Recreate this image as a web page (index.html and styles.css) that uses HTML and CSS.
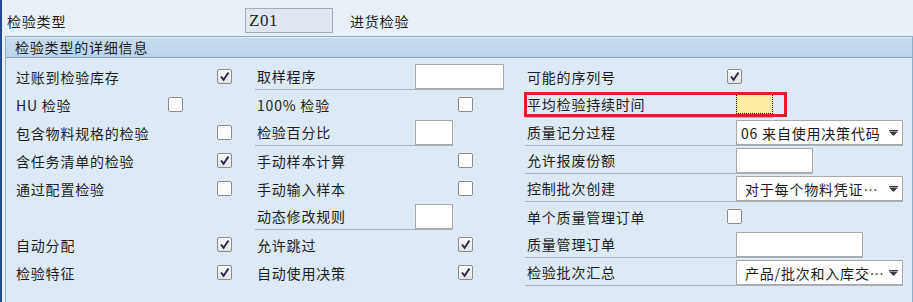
FILE: index.html
```html
<!DOCTYPE html>
<html lang="zh">
<head>
  <meta charset="UTF-8" />
  <title>检验类型</title>
  <link rel="stylesheet" href="styles.css">
</head>
<body>
  <div class="screen">
    <div class="top-row">
      <span class="top-label">检验类型</span>
      <span class="code-field">Z01</span>
      <span class="top-desc">进货检验</span>
    </div>

    <div class="group">
      <div class="group-title">检验类型的详细信息</div>
      <div class="grid">
        <!-- row 1 -->
        <div class="cell"><span class="lbl">过账到检验库存</span><span class="chk on"><svg viewBox="0 0 13 13" width="13" height="13"><path d="M3 6.5l2.6 3.4L10.5 2.5" fill="none" stroke="#2c2c52" stroke-width="2"/></svg></span></div>
        <div class="cell field"><span class="lbl f2">取样程序</span><span class="inp" style="width:89px"></span></div>
        <div class="cell"><span class="lbl c3">可能的序列号</span><span class="chk on"><svg viewBox="0 0 13 13" width="13" height="13"><path d="M3 6.5l2.6 3.4L10.5 2.5" fill="none" stroke="#2c2c52" stroke-width="2"/></svg></span></div>

        <!-- row 2 -->
        <div class="cell"><span class="lbl hu">HU 检验</span><span class="chk"></span></div>
        <div class="cell"><span class="lbl">100% 检验</span><span class="chk"></span></div>
        <div class="cell field"><span class="lbl f3">平均检验持续时间</span><span class="focus-inp"></span></div>

        <!-- row 3 -->
        <div class="cell"><span class="lbl">包含物料规格的检验</span><span class="chk"></span></div>
        <div class="cell field"><span class="lbl f2">检验百分比</span><span class="inp" style="width:38px"></span></div>
        <div class="cell field"><span class="lbl f3">质量记分过程</span><span class="inp sel" style="width:167px"><span class="sel-text">06 来自使用决策代码</span><svg class="arrow" viewBox="0 0 9 6" width="9" height="6"><path d="M0 0h9v1H0zM0 1.5h9L4.5 6z" fill="#3a3a44"/></svg></span></div>

        <!-- row 4 -->
        <div class="cell"><span class="lbl">含任务清单的检验</span><span class="chk on"><svg viewBox="0 0 13 13" width="13" height="13"><path d="M3 6.5l2.6 3.4L10.5 2.5" fill="none" stroke="#2c2c52" stroke-width="2"/></svg></span></div>
        <div class="cell"><span class="lbl">手动样本计算</span><span class="chk"></span></div>
        <div class="cell field"><span class="lbl f3">允许报废份额</span><span class="inp" style="width:77px"></span></div>

        <!-- row 5 -->
        <div class="cell"><span class="lbl">通过配置检验</span><span class="chk"></span></div>
        <div class="cell"><span class="lbl">手动输入样本</span><span class="chk"></span></div>
        <div class="cell field"><span class="lbl f3">控制批次创建</span><span class="inp sel" style="width:167px"><span class="sel-text wide">对于每个物料凭证…</span><svg class="arrow" viewBox="0 0 9 6" width="9" height="6"><path d="M0 0h9v1H0zM0 1.5h9L4.5 6z" fill="#3a3a44"/></svg></span></div>

        <!-- row 6 -->
        <div class="cell"></div>
        <div class="cell field"><span class="lbl f2">动态修改规则</span><span class="inp" style="width:38px"></span></div>
        <div class="cell"><span class="lbl c3">单个质量管理订单</span><span class="chk"></span></div>

        <!-- row 7 -->
        <div class="cell"><span class="lbl">自动分配</span><span class="chk on"><svg viewBox="0 0 13 13" width="13" height="13"><path d="M3 6.5l2.6 3.4L10.5 2.5" fill="none" stroke="#2c2c52" stroke-width="2"/></svg></span></div>
        <div class="cell"><span class="lbl">允许跳过</span><span class="chk on"><svg viewBox="0 0 13 13" width="13" height="13"><path d="M3 6.5l2.6 3.4L10.5 2.5" fill="none" stroke="#2c2c52" stroke-width="2"/></svg></span></div>
        <div class="cell field"><span class="lbl f3">质量管理订单</span><span class="inp" style="width:127px"></span></div>

        <!-- row 8 -->
        <div class="cell"><span class="lbl">检验特征</span><span class="chk on"><svg viewBox="0 0 13 13" width="13" height="13"><path d="M3 6.5l2.6 3.4L10.5 2.5" fill="none" stroke="#2c2c52" stroke-width="2"/></svg></span></div>
        <div class="cell"><span class="lbl">自动使用决策</span><span class="chk on"><svg viewBox="0 0 13 13" width="13" height="13"><path d="M3 6.5l2.6 3.4L10.5 2.5" fill="none" stroke="#2c2c52" stroke-width="2"/></svg></span></div>
        <div class="cell field"><span class="lbl f3">检验批次汇总</span><span class="inp sel" style="width:167px"><span class="sel-text wide">产品/批次和入库交…</span><svg class="arrow" viewBox="0 0 9 6" width="9" height="6"><path d="M0 0h9v1H0zM0 1.5h9L4.5 6z" fill="#3a3a44"/></svg></span></div>
      </div>
    </div>

    <div class="highlight"></div>
  </div>
</body>
</html>
```

FILE: styles.css
```css
body {
  margin: 0;
  font-family: "Noto Sans CJK SC", "Noto Sans", sans-serif;
  font-size: 14px;
  letter-spacing: 0.8px;
  color: #1c1c1c;
  background: #e8eff7;
}

.screen {
  position: relative;
  width: 913px;
  height: 302px;
  overflow: hidden;
  box-sizing: border-box;
  border-left: 2px solid #27498a;
  background: #e8eff7;
}

.top-row {
  display: flex;
  align-items: center;
  height: 25px;
  padding: 8px 0 0 5px;
  line-height: 20px;
}

.top-label {
  width: 238px;
}

.code-field {
  width: 88px;
  height: 25px;
  box-sizing: border-box;
  border: 1px solid #a3acb5;
  background: #dfe8f0;
  padding-left: 3px;
  font-family: "Liberation Serif", serif;
  font-size: 17px;
  letter-spacing: 0.5px;
  line-height: 23px;
  color: #222;
}

.top-desc {
  margin-left: 17px;
}

.group {
  margin: 3px 0 0 3px;
  height: 266px;
  box-sizing: border-box;
  border: 1px solid #8eaecb;
  border-bottom: none;
  background: #dde9f5;
}

.group-title {
  height: 20px;
  line-height: 20px;
  padding-left: 9px;
  background: linear-gradient(#cadcef, #bbd3ea);
  border-bottom: 1px solid #89a8c6;
  box-shadow: inset 0 1px #e2edf8;
}

.grid {
  display: grid;
  grid-template-columns: 241px 270px 1fr;
  grid-auto-rows: 28px;
  padding: 5px 0 0 8px;
}

.cell {
  display: flex;
  align-items: center;
  height: 28px;
  padding-left: 2px;
  box-sizing: border-box;
}

.cell.field {
  justify-self: start;
  height: 27px;
  border-bottom: 1px solid #a7b2be;
}

.lbl {
  flex: none;
  width: 201px;
  white-space: nowrap;
  line-height: 20px;
}

.lbl.hu { width: 152px; }
.lbl.c3 { width: 200px; }
.lbl.f2 { width: 158px; }
.lbl.f3 { width: 209px; }

.chk {
  flex: none;
  width: 15px;
  height: 15px;
  box-sizing: border-box;
  border: 1px solid #8c8c8c;
  border-radius: 2px;
  background: #fff;
  margin-top: -1px;
}

.chk.on {
  background: linear-gradient(#fbfbfb, #e4e4e4);
}

.chk svg {
  display: block;
}

.inp {
  flex: none;
  align-self: flex-end;
  height: 25px;
  box-sizing: border-box;
  border: 1px solid #a9a9a9;
  background: #fff;
}

.sel {
  display: flex;
  align-items: center;
  justify-content: space-between;
  padding: 0 3px 0 4px;
  height: 25px;
}

.sel-text {
  white-space: nowrap;
  line-height: 20px;
  color: #1a1a1a;
}

.sel-text.wide {
  padding-left: 4px;
}

.arrow {
  display: block;
  margin-right: 1px;
}

.focus-inp {
  flex: none;
  align-self: flex-start;
  margin-top: 3px;
  width: 37px;
  height: 20px;
  box-sizing: border-box;
  border: 1px dotted #111;
  border-top: none;
  background: #fdeda0;
}

.highlight {
  position: absolute;
  left: 522px;
  top: 92px;
  width: 263px;
  height: 25px;
  box-sizing: border-box;
  border: 3px solid #e31e2a;
}
```
